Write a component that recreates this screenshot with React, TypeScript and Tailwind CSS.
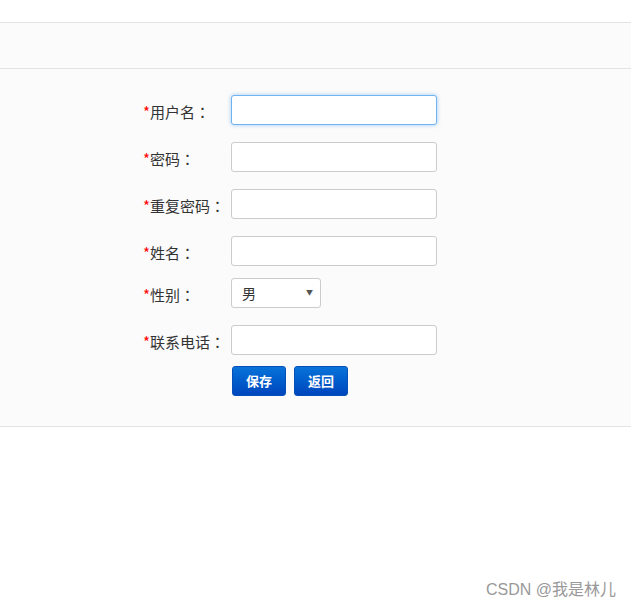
const font = { fontFamily: '"Microsoft YaHei", "Noto Sans CJK SC", sans-serif' };

const fields = [
  { label: "用户名", focus: true },
  { label: "密码" },
  { label: "重复密码" },
  { label: "姓名" },
];

function Label({ text }: { text: string }) {
  return (
    <div className="w-[88px] shrink-0 pt-[5px] text-[15px] text-[#333]">
      <span className="text-[#f00]">*</span>
      {text}
      <span style={{ fontFamily: '"Noto Sans CJK TC", sans-serif' }}>：</span>
    </div>
  );
}

export default function App() {
  return (
    <div className="min-h-[609px] bg-white" style={font}>
      <div className="h-[22px]" />
      <div className="h-[47px] border-y border-[#e3e3e3] bg-[#fbfbfb]" />
      <div className="border-b border-[#e3e3e3] bg-[#fbfbfb] pl-[143px] pt-[26px] pb-[30px]">
        {fields.map((f) => (
          <div key={f.label} className="mb-[17px] flex items-center">
            <Label text={f.label} />
            <input
              className={
                "h-[30px] w-[206px] rounded-[3px] border bg-white px-2 text-sm outline-none " +
                (f.focus ? "border-[#6fb3f0] shadow-[0_0_4px_rgba(100,170,240,0.6)]" : "border-[#cccccc]")
              }
            />
          </div>
        ))}
        <div className="-mt-[5px] mb-[17px] flex items-center">
          <Label text="性别" />
          <div className="relative flex h-[30px] w-[90px] items-center rounded-[3px] border border-[#cccccc] bg-white pl-[10px] text-[14px] text-[#333]">
            男
            <span className="absolute right-[7px] top-[8px] text-[7px] text-[#555]">▼</span>
          </div>
        </div>
        <div className="mb-[11px] flex items-center">
          <Label text="联系电话" />
          <input className="h-[30px] w-[206px] rounded-[3px] border border-[#cccccc] bg-white px-2 text-sm outline-none" />
        </div>
        <div className="flex gap-[8px] pl-[89px]">
          {["保存", "返回"].map((t) => (
            <button
              key={t}
              className="h-[30px] w-[54px] rounded-[3px] border border-[#0450b8] bg-gradient-to-b from-[#0b73d9] to-[#0045bd] text-[13px] font-bold text-white"
            >
              {t}
            </button>
          ))}
        </div>
      </div>
      <div
        className="flex justify-end pr-[15px] pt-[151px] text-[16px] text-[#999]"
        style={{ fontFamily: '"Liberation Sans", "Noto Sans CJK SC", sans-serif' }}
      >
        CSDN @我是林儿
      </div>
    </div>
  );
}
